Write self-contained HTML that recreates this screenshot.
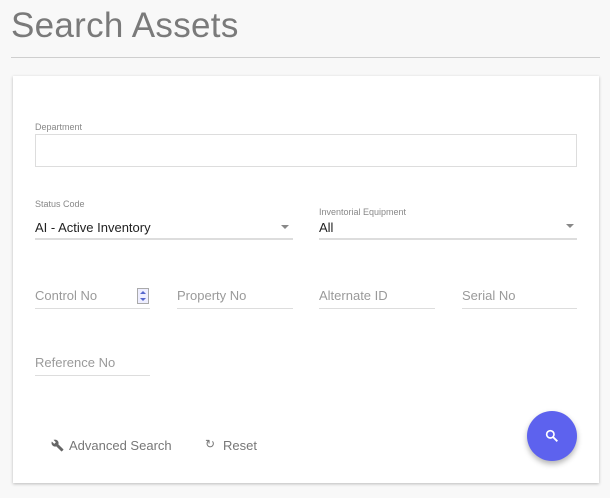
<!DOCTYPE html>
<html><head><style>
*{margin:0;padding:0;box-sizing:border-box}
body{width:610px;height:498px;background:#f8f8f8;font-family:"Liberation Sans",sans-serif;position:relative;overflow:hidden}
.a{position:absolute}
h1{position:absolute;left:11px;top:6px;font-size:35px;font-weight:normal;color:#7a7a7a;letter-spacing:0.3px}
.hr{left:11px;top:57px;width:589px;height:1px;background:#cfcfcf}
.card{left:13px;top:76px;width:586px;height:407px;background:#fff;box-shadow:0 1px 3px rgba(0,0,0,.25)}
.lbl{font-size:9px;color:#888}
.ph{font-size:13px;color:#9a9a9a}
.ul{height:1px;background:#ddd}
.ul2{height:2px;background:#ddd}
.val{font-size:13px;color:#222}
.tri{width:0;height:0;border-left:4px solid transparent;border-right:4px solid transparent;border-top:4px solid #888}
.btn{font-size:13px;color:#777}
</style></head><body>
<h1>Search Assets</h1>
<div class="a hr"></div>
<div class="a card"></div>
<div class="a lbl" style="left:35px;top:122px">Department</div>
<div class="a" style="left:35px;top:134px;width:542px;height:33px;border:1px solid #ddd"></div>
<div class="a lbl" style="left:35px;top:199px">Status Code</div>
<div class="a val" style="left:35px;top:220px">AI - Active Inventory</div>
<div class="a tri" style="left:281px;top:225px"></div>
<div class="a ul2" style="left:35px;top:238px;width:258px"></div>
<div class="a lbl" style="left:319px;top:207px">Inventorial Equipment</div>
<div class="a val" style="left:319px;top:220px">All</div>
<div class="a tri" style="left:566px;top:224px"></div>
<div class="a ul2" style="left:319px;top:238px;width:258px"></div>
<div class="a ph" style="left:35px;top:288px">Control No</div>
<div class="a" style="left:137px;top:288px;width:12px;height:16px;border:1px solid #aaa;background:#eef">
<div class="a" style="left:2px;top:2px;border-left:3px solid transparent;border-right:3px solid transparent;border-bottom:3px solid #56c"></div>
<div class="a" style="left:2px;top:9px;border-left:3px solid transparent;border-right:3px solid transparent;border-top:3px solid #56c"></div></div>
<div class="a ul" style="left:35px;top:308px;width:115px"></div>
<div class="a ph" style="left:177px;top:288px">Property No</div>
<div class="a ul" style="left:177px;top:308px;width:116px"></div>
<div class="a ph" style="left:319px;top:288px">Alternate ID</div>
<div class="a ul" style="left:319px;top:308px;width:116px"></div>
<div class="a ph" style="left:462px;top:288px">Serial No</div>
<div class="a ul" style="left:462px;top:308px;width:115px"></div>
<div class="a ph" style="left:35px;top:355px">Reference No</div>
<div class="a ul" style="left:35px;top:375px;width:115px"></div>
<svg class="a" style="left:51px;top:439px" width="13" height="13" viewBox="0 0 24 24"><path fill="#666" d="M22.7 19l-9.1-9.1c.9-2.3.4-5-1.5-6.9-2-2-5-2.4-7.4-1.3L9 6 6 9 1.6 4.7C.4 7.1.9 10.1 2.9 12.1c1.9 1.9 4.6 2.4 6.9 1.5l9.1 9.1c.4.4 1 .4 1.4 0l2.3-2.3c.5-.4.5-1.1.1-1.4z"/></svg>
<div class="a btn" style="left:69px;top:438px">Advanced Search</div>
<div class="a btn" style="left:205px;top:437px;font-size:12px">&#8635;</div>
<div class="a btn" style="left:223px;top:438px">Reset</div>
<div class="a" style="left:527px;top:411px;width:50px;height:50px;border-radius:50%;background:#5d62ee;box-shadow:0 3px 6px rgba(0,0,0,.3)"></div>
<svg class="a" style="left:544px;top:428px" width="16" height="16" viewBox="0 0 24 24"><circle cx="9.5" cy="9.5" r="5.5" fill="none" stroke="#fff" stroke-width="2.5"/><path d="M13.5 13.5L20 20" stroke="#fff" stroke-width="2.8"/></svg>
</body></html>
